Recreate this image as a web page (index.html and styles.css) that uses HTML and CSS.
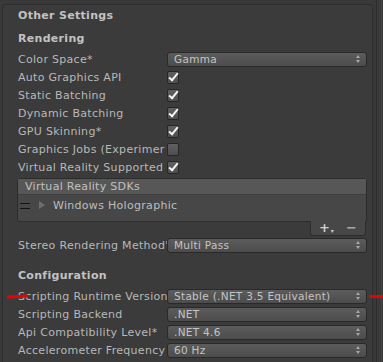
FILE: index.html
```html
<!DOCTYPE html>
<html>
<head>
    <title>Other Settings</title>
    <link rel="stylesheet" href="styles.css">
</head>
<body>
    <div class="inspector">
        <div class="panel">
            <div class="title">Other Settings</div>

            <div class="section">Rendering</div>
            <div class="row">
                <span class="label">Color Space*</span>
                <div class="dropdown">Gamma</div>
            </div>
            <div class="row">
                <span class="label">Auto Graphics API</span>
                <span class="check on"></span>
            </div>
            <div class="row">
                <span class="label">Static Batching</span>
                <span class="check on"></span>
            </div>
            <div class="row">
                <span class="label">Dynamic Batching</span>
                <span class="check on"></span>
            </div>
            <div class="row">
                <span class="label">GPU Skinning*</span>
                <span class="check on"></span>
            </div>
            <div class="row">
                <span class="label">Graphics Jobs (Experimer</span>
                <span class="check"></span>
            </div>
            <div class="row">
                <span class="label">Virtual Reality Supported</span>
                <span class="check on"></span>
            </div>

            <div class="sdk-list">
                <div class="sdk-head">Virtual Reality SDKs</div>
                <div class="sdk-body">
                    <div class="sdk-item">
                        <span class="handle"></span>
                        <span class="arrow"></span>
                        <span>Windows Holographic</span>
                    </div>
                </div>
            </div>
            <div class="sdk-foot">
                <div class="sdk-buttons">
                    <span class="plus">+<small>&#9662;</small></span>
                    <span class="minus">&minus;</span>
                </div>
            </div>

            <div class="row">
                <span class="label">Stereo Rendering Method'</span>
                <div class="dropdown">Multi Pass</div>
            </div>

            <div class="section config">Configuration</div>
            <div class="row">
                <span class="label">Scripting Runtime Version</span>
                <div class="dropdown">Stable (.NET 3.5 Equivalent)</div>
            </div>
            <div class="row">
                <span class="label">Scripting Backend</span>
                <div class="dropdown">.NET</div>
            </div>
            <div class="row">
                <span class="label">Api Compatibility Level*</span>
                <div class="dropdown">.NET 4.6</div>
            </div>
            <div class="row">
                <span class="label">Accelerometer Frequency</span>
                <div class="dropdown">60 Hz</div>
            </div>
        </div>
        <div class="scrollbar"></div>
    </div>

    <!-- annotation marks -->
    <div class="mark mark-left"></div>
    <div class="mark mark-right"></div>
</body>
</html>
```

FILE: styles.css
```css
body {
    margin: 0;
    padding: 0;
    background: #393939;
    font-family: "DejaVu Sans", Verdana, sans-serif;
    font-size: 11px;
    letter-spacing: 0.3px;
    color: #b8b8b8;
    overflow: hidden;
}

.inspector {
    display: flex;
    height: 362px;
    overflow: hidden;
}

.panel {
    margin: 4px 0 0 2px;
    width: 354px;
    height: 362px;
    padding: 0 0 0 15px;
    border: 1px solid #2e2e2e;
    border-radius: 3px;
    background: #3b3b3b;
    flex-shrink: 0;
}

.scrollbar {
    width: 4px;
    margin-left: 3px;
    border-left: 1px solid #2c2c2c;
    border-right: 1px solid #444;
}

.title {
    height: 22px;
    line-height: 22px;
    font-weight: bold;
    color: #c2c2c2;
}

.section {
    height: 18px;
    line-height: 18px;
    margin: 3px 0 2px;
    font-weight: bold;
    color: #c2c2c2;
}

.section.config {
    margin: 13px 0 2px;
}

.row {
    display: flex;
    align-items: center;
    height: 18px;
}

.label {
    width: 149px;
    flex-shrink: 0;
    white-space: nowrap;
}

.dropdown {
    position: relative;
    box-sizing: border-box;
    width: 200px;
    height: 15px;
    line-height: 13px;
    padding-left: 6px;
    border: 1px solid #292929;
    border-radius: 3px;
    background: linear-gradient(#5c5c5c, #4c4c4c);
    color: #c4c4c4;
    font-size: 10.5px;
}

.dropdown::before,
.dropdown::after {
    content: "";
    position: absolute;
    right: 6px;
    width: 0;
    height: 0;
    border-left: 2.5px solid transparent;
    border-right: 2.5px solid transparent;
}

.dropdown::before {
    top: 2px;
    border-bottom: 3px solid #a8a8a8;
}

.dropdown::after {
    top: 7px;
    border-top: 3px solid #a8a8a8;
}

.check {
    position: relative;
    box-sizing: border-box;
    width: 12px;
    height: 13px;
    border: 1px solid #262626;
    border-radius: 2px;
    background: linear-gradient(#606060, #4e4e4e);
}

.check.on::after {
    content: "";
    position: absolute;
    left: 3px;
    top: -1px;
    width: 3px;
    height: 8px;
    border: solid #f4f4f4;
    border-width: 0 2px 2px 0;
    transform: rotate(40deg);
}

.sdk-list {
    width: 350px;
    margin: 2px 0 0 -1px;
    box-sizing: border-box;
    border: 1px solid #2c2c2c;
    border-radius: 3px 3px 0 3px;
    background: #474747;
}

.sdk-head {
    height: 15px;
    line-height: 15px;
    padding-left: 7px;
    background: #575757;
    border-bottom: 1px solid #404040;
    color: #c0c0c0;
}

.sdk-body {
    height: 26px;
}

.sdk-item {
    display: flex;
    align-items: center;
    height: 20px;
    padding-left: 2px;
    color: #bdbdbd;
}

.handle {
    width: 10px;
    height: 4px;
    border-top: 1px solid #141414;
    border-bottom: 1px solid #141414;
    margin: 2px 9px 0 0;
}

.arrow {
    width: 0;
    height: 0;
    border-left: 6px solid #6e6e6e;
    border-top: 4px solid transparent;
    border-bottom: 4px solid transparent;
    margin-right: 8px;
}

.sdk-foot {
    display: flex;
    justify-content: flex-end;
    width: 349px;
    margin-left: -1px;
}

.sdk-buttons {
    display: flex;
    align-items: center;
    justify-content: space-around;
    width: 54px;
    height: 14px;
    margin-top: -1px;
    border: 1px solid #2c2c2c;
    border-top: none;
    border-radius: 0 0 3px 3px;
    background: #474747;
    color: #cfcfcf;
    font-weight: bold;
    font-size: 13px;
}

.plus {
    position: relative;
    line-height: 12px;
}

.plus small {
    position: absolute;
    font-size: 6px;
    right: -4px;
    bottom: -3px;
}

.minus {
    line-height: 12px;
    color: #a8a8a8;
}

.mark {
    position: absolute;
    height: 3px;
    background: #ee0000;
    border-radius: 1px;
}

.mark-left {
    left: 7px;
    top: 295px;
    width: 21px;
    transform: rotate(-3deg);
}

.mark-right {
    left: 369px;
    top: 295px;
    width: 14px;
}
```
